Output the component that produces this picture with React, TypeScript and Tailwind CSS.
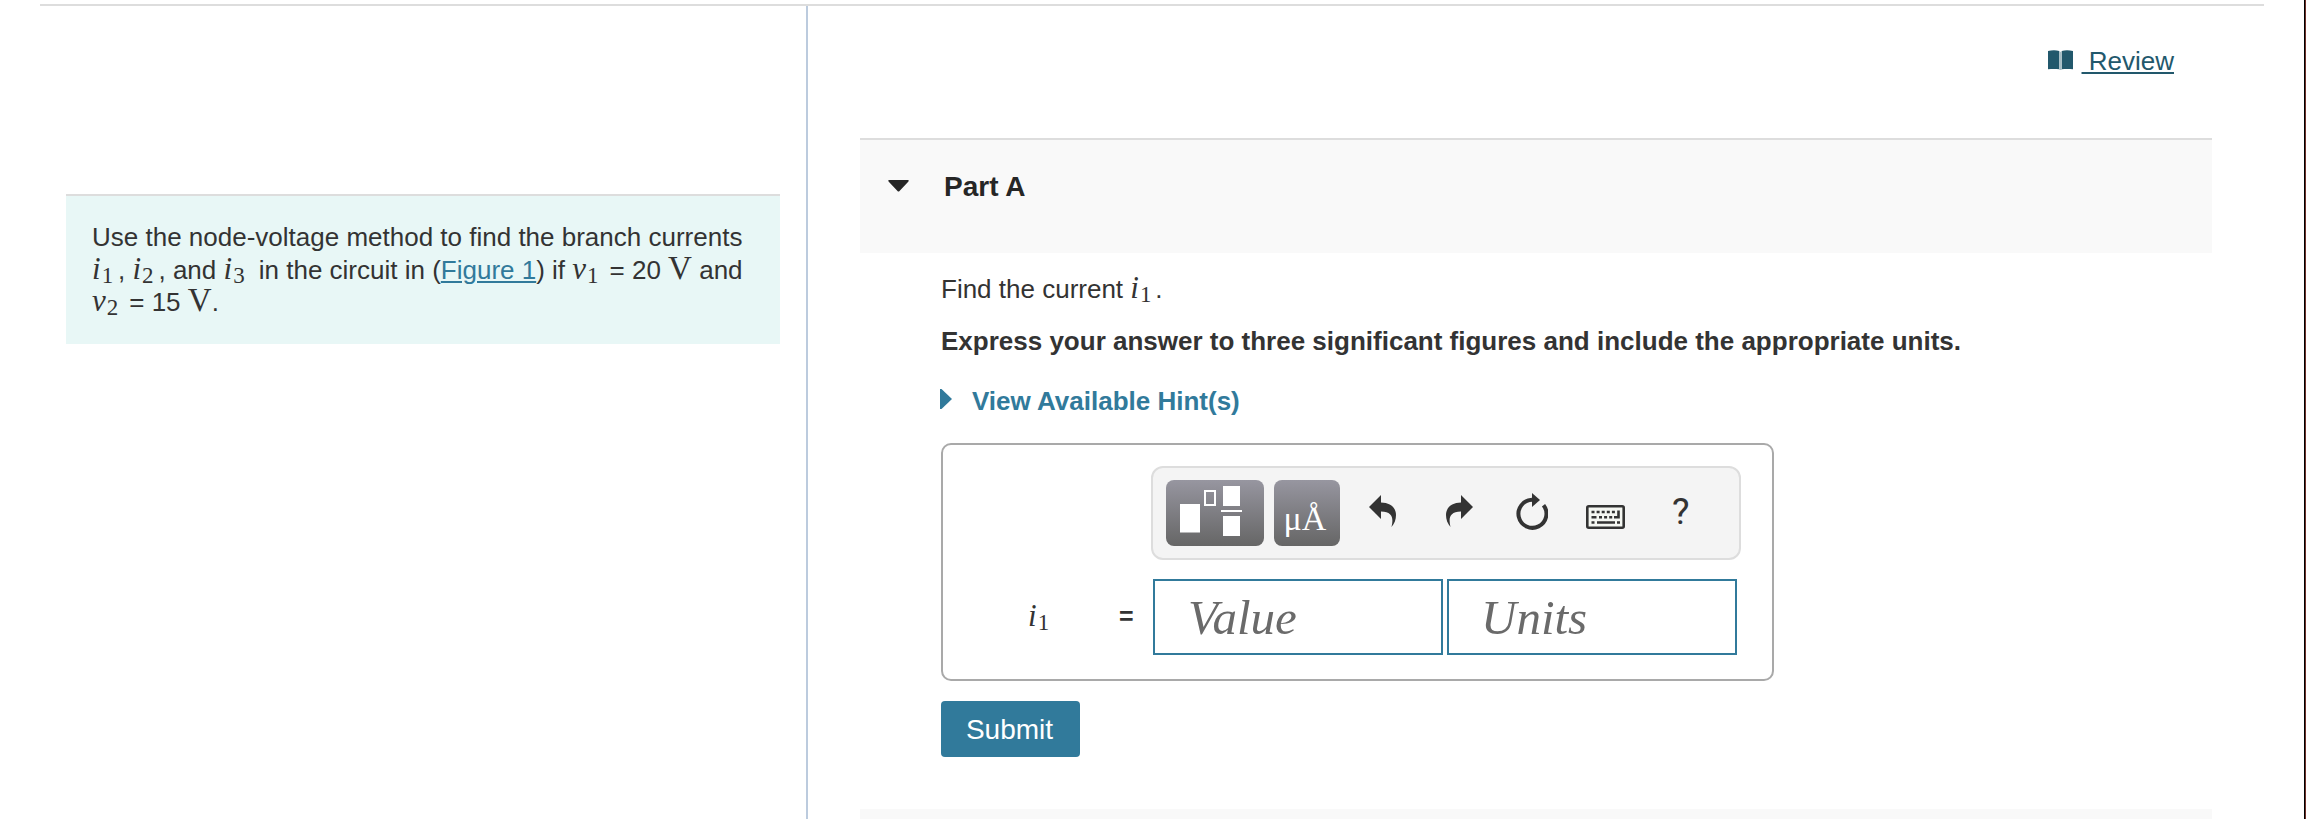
import { useState, type FormEvent, type ReactNode } from "react";

type MathVarProps = {
  name: string;
  sub: string;
  className?: string;
};

function MathVar({ name, sub, className = "" }: MathVarProps) {
  return (
    <span className={`inline-block whitespace-nowrap font-['Liberation_Serif',serif] leading-none ${className}`}>
      <span className="text-[31px] leading-none italic">{name}</span>
      <span className="relative top-1 ml-px text-[23px] leading-none">{sub}</span>
    </span>
  );
}

function Unit({ children }: { children: ReactNode }) {
  return <span className="font-['Liberation_Serif',serif] text-[33px] leading-none">{children}</span>;
}

function BookIcon() {
  return (
    <svg className="h-5 w-[25px]" viewBox="0 0 25 20" fill="#22586c">
      <path d="M0 1C4 0 8 0 11.3 1V19.3C8 18.8 4 18.8 0 19.3Z" />
      <path d="M13.7 1C17 0 21 0 25 1V19.3C21 18.8 17 18.8 13.7 19.3Z" />
      <path d="M11.3 1.8h2.4V20h-2.4Z" fill="#a5bcc4" />
    </svg>
  );
}

function UndoIcon() {
  return (
    <svg className="h-8 w-[27px]" viewBox="0 0 27 32" fill="#333">
      <path d="M0 12 12 0V7.6C21 7.6 27 12.500 27 20C27 24.500 25.500 28.500 22.500 32C24.500 24 24 16.500 12 16.500V24Z" />
    </svg>
  );
}

function ResetIcon() {
  return (
    <svg className="h-[37px] w-8" viewBox="0 0 32 37">
      <path d="M27.500 12.200A14 14 0 1 1 16 6.800" fill="none" stroke="#333" strokeWidth="4" />
      <path d="M16 0 24 7 16 14Z" fill="#333" />
    </svg>
  );
}

function KeyboardIcon() {
  return (
    <svg className="h-6 w-[39px]" viewBox="0 0 39 24">
      <rect x="1.300" y="1.300" width="36.400" height="21.400" rx="1.500" fill="#f5f7f2" stroke="#333" strokeWidth="2.600" />
      <path d="M5.500 7H29" stroke="#333" strokeWidth="2.600" strokeDasharray="3 2.100" />
      <path d="M32.500 5.500V12.300H28M5.500 12.300H10.500" fill="none" stroke="#333" strokeWidth="2.600" />
      <path d="M13 12.300H27" stroke="#333" strokeWidth="2.600" strokeDasharray="3 2.100" />
      <path d="M5.500 17.500H8.500M11 17.500H29M31 17.500H34" stroke="#333" strokeWidth="2.400" />
    </svg>
  );
}

function TemplateIcon() {
  return (
    <svg className="h-[66px] w-[98px]" viewBox="0 0 98 66" fill="#fff">
      <rect x="14" y="24" width="20" height="28.500" />
      <rect x="39" y="11" width="10" height="14" fill="none" stroke="#fff" strokeWidth="2" />
      <rect x="57" y="6" width="17" height="20" />
      <rect x="55" y="30" width="21" height="2" />
      <rect x="57" y="36" width="17" height="20" />
    </svg>
  );
}

export default function App() {
  const [value, setValue] = useState("");
  const [units, setUnits] = useState("");

  function handleSubmit(e: FormEvent) {
    e.preventDefault();
  }

  return (
    <div className="flex h-[819px] w-[2306px] overflow-hidden bg-white font-['Liberation_Sans',sans-serif] text-[26px] text-[#333]">
      <div className="flex w-[2304px] flex-col pt-1">
        <div className="ml-10 h-0.5 w-[2224px] shrink-0 bg-[#ddd]" />
        <div className="flex grow">
          {/* Problem statement */}
          <aside className="w-[808px] border-r-2 border-[#bccbde] pt-[188px] pl-[66px]">
            <div className="h-[150px] w-[714px] border-t-2 border-[#ddd] bg-[#e8f7f6] pt-[25px] pl-[26px] whitespace-nowrap">
              <div className="h-[31px] leading-8">Use the node-voltage method to find the branch currents</div>
              <div className="h-8 leading-8">
                <MathVar name="i" sub="1" className="w-[26px]" />, <MathVar name="i" sub="2" className="w-[26px]" />, and{" "}
                <MathVar name="i" sub="3" className="w-[28px]" /> in the circuit in (
                <a className="text-[#317a9b] underline decoration-2 underline-offset-2" href="#">Figure 1</a>) if{" "}
                <MathVar name="v" sub="1" className="w-[30px]" /> = 20 <Unit>V</Unit> and
              </div>
              <div className="h-8 leading-8">
                <MathVar name="v" sub="2" className="w-[30px]" /> = 15 <Unit>V</Unit>.
              </div>
            </div>
          </aside>

          {/* Question */}
          <main className="flex grow flex-col pl-[52px]">
            <div className="flex h-[132px] w-[1352px] shrink-0 justify-end pt-10 pr-[38px]">
              <a className="flex items-start text-[#22586c]" href="#">
                <span className="pt-1"><BookIcon /></span>
                <span className="ml-[9px] leading-[30px] whitespace-pre underline decoration-2 underline-offset-2"> Review</span>
              </a>
            </div>

            <div className="flex h-[115px] w-[1352px] shrink-0 items-start border-t-2 border-[#ddd] bg-[#f9f9f9] pt-[30px] pl-7">
              <svg className="mt-2.5 h-3 w-[21px]" viewBox="0 0 21 12" fill="#262626">
                <path d="M1 0H20Q21.500 .5 20 2L11.500 11Q10.500 12 9.500 11L1 2Q-.5 .5 1 0Z" />
              </svg>
              <h2 className="ml-[35px] pt-px text-[28px] leading-8 font-bold text-[#262626]">Part A</h2>
            </div>

            <form onSubmit={handleSubmit} className="flex w-[1352px] grow flex-col items-start pl-[81px]">
              <p className="mt-[19px] h-8 leading-8 whitespace-nowrap">
                Find the current <MathVar name="i" sub="1" className="w-[25px]" />.
              </p>
              <p className="mt-[21px] h-8 leading-8 font-bold whitespace-nowrap">
                Express your answer to three significant figures and include the appropriate units.
              </p>
              <a className="mt-7 flex h-8 items-center leading-8 font-bold text-[#317a9b]" href="#">
                <svg className="mb-1 -ml-px h-5 w-3" viewBox="0 0 12 20" fill="#317a9b">
                  <path d="M0 0H1.500L12 10 1.500 20H0Z" />
                </svg>
                <span className="ml-5">View Available Hint(s)</span>
              </a>

              <div className="mt-[26px] h-[238px] w-[833px] rounded-[10px] border-2 border-[#a9a9a9] pt-[21px] pl-[208px]">
                <div className="flex h-[94px] w-[590px] items-center rounded-xl border-2 border-[#ddd] bg-[#f4f4f4] pl-[13px]">
                  <button type="button" className="h-[66px] w-[98px] rounded-lg bg-linear-to-b from-[#9796a0] to-[#666]">
                    <TemplateIcon />
                  </button>
                  <button type="button" className="ml-2.5 h-[66px] w-[66px] rounded-lg bg-linear-to-b from-[#9796a0] to-[#666] pt-2.5 pr-1 font-['Liberation_Serif',serif] text-[34px] text-white">
                    μÅ
                  </button>
                  <button type="button" className="mb-1 ml-[29px]"><UndoIcon /></button>
                  <button type="button" className="mb-1 ml-[50px] -scale-x-100"><UndoIcon /></button>
                  <button type="button" className="mb-1 ml-[43px]"><ResetIcon /></button>
                  <button type="button" className="mt-2 ml-[38px]"><KeyboardIcon /></button>
                  <button type="button" className="mb-0.5 ml-[47px] font-['Roboto',sans-serif] text-[37px]">?</button>
                </div>
                <div className="mt-[19px] -ml-[123px] flex h-[76px] items-center">
                  <MathVar name="i" sub="1" className="mb-[3px] w-[91px]" />
                  <span className="w-[34px] text-[25px] font-bold">=</span>
                  <input
                    className="h-[76px] w-[290px] border-2 border-[#317a9b] pl-[33px] font-['Liberation_Serif',serif] text-[49px] italic outline-none placeholder:text-[#6a6a6a]"
                    placeholder="Value"
                    value={value}
                    onChange={e => setValue(e.target.value)}
                  />
                  <input
                    className="ml-1 h-[76px] w-[290px] border-2 border-[#317a9b] pl-8 font-['Liberation_Serif',serif] text-[49px] italic outline-none placeholder:text-[#6a6a6a]"
                    placeholder="Units"
                    value={units}
                    onChange={e => setUnits(e.target.value)}
                  />
                </div>
              </div>

              <button type="submit" className="mt-5 h-14 w-[139px] rounded bg-[#317a9b] pt-px pr-0.5 text-[28px] text-white">
                Submit
              </button>
            </form>
            <div className="h-2.5 w-[1352px] shrink-0 bg-[#f9f9f9]" />
          </main>
        </div>
      </div>
      <div className="w-px bg-black" />
      <div className="w-px bg-[#6e3029]" />
    </div>
  );
}
